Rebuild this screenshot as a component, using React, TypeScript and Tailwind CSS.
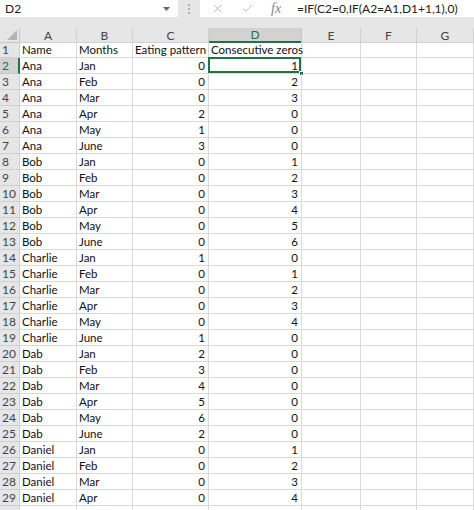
import { X, Check } from "lucide-react";

const cols = ["A", "B", "C", "D", "E", "F", "G"];

const rows: [string, string, string, string][] = [
  ["Name", "Months", "Eating pattern", "Consecutive zeros"],
  ["Ana", "Jan", "0", "1"],
  ["Ana", "Feb", "0", "2"],
  ["Ana", "Mar", "0", "3"],
  ["Ana", "Apr", "2", "0"],
  ["Ana", "May", "1", "0"],
  ["Ana", "June", "3", "0"],
  ["Bob", "Jan", "0", "1"],
  ["Bob", "Feb", "0", "2"],
  ["Bob", "Mar", "0", "3"],
  ["Bob", "Apr", "0", "4"],
  ["Bob", "May", "0", "5"],
  ["Bob", "June", "0", "6"],
  ["Charlie", "Jan", "1", "0"],
  ["Charlie", "Feb", "0", "1"],
  ["Charlie", "Mar", "0", "2"],
  ["Charlie", "Apr", "0", "3"],
  ["Charlie", "May", "0", "4"],
  ["Charlie", "June", "1", "0"],
  ["Dab", "Jan", "2", "0"],
  ["Dab", "Feb", "3", "0"],
  ["Dab", "Mar", "4", "0"],
  ["Dab", "Apr", "5", "0"],
  ["Dab", "May", "6", "0"],
  ["Dab", "June", "2", "0"],
  ["Daniel", "Jan", "0", "1"],
  ["Daniel", "Feb", "0", "2"],
  ["Daniel", "Mar", "0", "3"],
  ["Daniel", "Apr", "0", "4"],
  ["", "", "", ""],
];

const gridCols = "grid grid-cols-[20px_57px_56px_76px_93px_59px_56px_1fr]";

const FormulaBar = () => (
  <div className="flex h-[17px] bg-white text-[12px] text-[#222]">
    <div className="w-[178px] flex items-center justify-between pl-[5px] pr-[8px]">
      <span>D2</span>
      <svg width="7" height="4" viewBox="0 0 7 4">
        <path d="M0 0h7L3.5 4z" fill="#666" />
      </svg>
    </div>
    <div className="w-[22px] bg-[#e6e6e6] flex flex-col items-center justify-center gap-[2px]">
      <span className="w-[2px] h-[2px] bg-[#b0b0b0]" />
      <span className="w-[2px] h-[2px] bg-[#b0b0b0]" />
      <span className="w-[2px] h-[2px] bg-[#b0b0b0]" />
    </div>
    <div className="flex items-center pl-[11px] gap-[17px]">
      <X size={13} strokeWidth={1.2} color="#9a9a9a" />
      <Check size={13} strokeWidth={1.2} color="#9a9a9a" />
      <span className="font-['Liberation_Serif',serif] italic text-[14px] text-[#888] w-[14px]">fx</span>
    </div>
    <div className="flex items-center pl-[12px]">=IF(C2=0,IF(A2=A1,D1+1,1),0)</div>
  </div>
);

export default function App() {
  return (
    <div className="w-[474px] h-[510px] overflow-hidden bg-[#e6e6e6] font-['Lato',sans-serif]">
      <FormulaBar />
      <div className="h-[11px]" />
      <div className={`${gridCols} h-[14px] text-[12px] leading-[13px] text-[#444] bg-[#e6e6e6]`}>
        <div className="border-r border-b border-[#c8c8c8] relative">
          <svg className="absolute right-[2px] bottom-[2px]" width="10" height="10" viewBox="0 0 10 10">
            <path d="M10 0V10H0z" fill="#b4b4b4" />
          </svg>
        </div>
        {cols.map((c) => (
          <div
            key={c}
            className={
              c === "D"
                ? "flex items-center justify-center bg-[#d2d2d2] border-r border-[#c8c8c8] border-b-2 border-b-[#217346] text-[#217346]"
                : "flex items-center justify-center border-r border-b border-[#d0d0d0]"
            }
          >
            {c}
          </div>
        ))}
      </div>
      <div className="bg-white">
        {rows.map((r, i) => {
          const n = i + 1;
          const sel = n === 2;
          return (
            <div key={n} className={`${gridCols} h-[16px] text-[11.5px] text-[#111] leading-[15px]`}>
              <div
                className={
                  sel
                    ? "bg-[#d2d2d2] border-b border-[#c8c8c8] border-r-2 border-r-[#217346] text-[#217346] pl-[2px] text-[12px]"
                    : "bg-[#e6e6e6] border-r border-b border-[#d0d0d0] text-[#444] pl-[2px] text-[12px]"
                }
              >
                {n < 30 ? n : ""}
              </div>
              <div className="border-r border-b border-[#dadada] pl-[2px] whitespace-nowrap">{r[0]}</div>
              <div className="border-r border-b border-[#dadada] pl-[2px] whitespace-nowrap">{r[1]}</div>
              <div
                className={`border-r border-b border-[#dadada] whitespace-nowrap ${
                  n === 1 ? "pl-[2px]" : "text-right pr-[3px]"
                }`}
              >
                {r[2]}
              </div>
              <div
                className={`border-r border-b border-[#dadada] whitespace-nowrap relative ${
                  n === 1 ? "pl-[2px]" : "text-right pr-[3px]"
                }`}
              >
                {r[3]}
                {sel && (
                  <>
                    <div className="absolute -left-[1px] -top-[1px] right-0 bottom-0 border-2 border-[#217346]" />
                    <div className="absolute -right-[3px] -bottom-[3px] w-[5px] h-[5px] bg-[#217346] border border-white" />
                  </>
                )}
              </div>
              <div className="border-r border-b border-[#dadada]" />
              <div className="border-r border-b border-[#dadada]" />
              <div className="border-r border-b border-[#dadada]" />
            </div>
          );
        })}
      </div>
    </div>
  );
}
